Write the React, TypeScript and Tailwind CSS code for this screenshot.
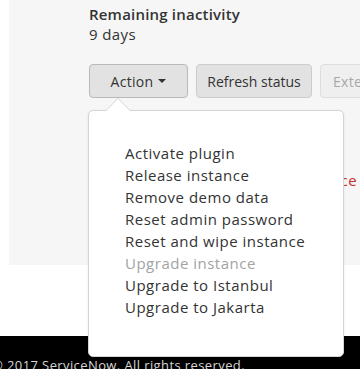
import React from "react";

const items: { label: string; disabled?: boolean }[] = [
  { label: "Activate plugin" },
  { label: "Release instance" },
  { label: "Remove demo data" },
  { label: "Reset admin password" },
  { label: "Reset and wipe instance" },
  { label: "Upgrade instance", disabled: true },
  { label: "Upgrade to Istanbul" },
  { label: "Upgrade to Jakarta" },
];

export default function App() {
  return (
    <div
      className="relative w-[360px] h-[369px] overflow-hidden bg-white text-[#333]"
      style={{ fontFamily: '"Open Sans", "Liberation Sans", sans-serif' }}
    >
      <div className="ml-[9px] h-[265px] bg-[#f6f6f6] pt-[4px] pl-[80px] overflow-hidden">
        <div className="text-[15px] font-semibold leading-[20px] tracking-[0.2px]">Remaining inactivity</div>
        <div className="text-[15px] leading-[20px] tracking-[0.4px]">9 days</div>
        <div className="mt-[20px] flex gap-[8px] whitespace-nowrap">
          <button className="h-[34px] w-[99px] shrink-0 rounded-[4px] border border-[#b9b9b9] bg-[#e2e2e2] text-[14px] text-[#333] flex items-center justify-center gap-[5px] tracking-[0.3px]">
            Action
            <span className="inline-block w-0 h-0 border-l-[4px] border-r-[4px] border-t-[4px] border-l-transparent border-r-transparent border-t-[#333]" />
          </button>
          <button className="h-[34px] w-[116px] shrink-0 rounded-[4px] border border-[#cccccc] bg-[#e2e2e2] text-[14px] text-[#333]">
            Refresh status
          </button>
          <button className="h-[34px] w-[116px] shrink-0 rounded-[4px] border border-[#dddddd] bg-[#efefef] text-[14px] text-[#a8a8a8] text-left pl-[12px] tracking-[0.3px]">
            Extend
          </button>
        </div>
        <div className="mt-[72px] text-right pr-[3px] text-[15px] leading-[20px] text-[#c9302c] whitespace-nowrap tracking-[0.4px]">
          Extend now to keep your instance
        </div>
      </div>
      <div className="h-[71px]" />
      <div className="h-[33px] bg-black text-[#d6d6d6] text-[13px] leading-[18px] pt-[20px] whitespace-nowrap tracking-[0.4px]">
        <span className="ml-[-8px]">© 2017 ServiceNow. All rights reserved.</span>
      </div>

      <div className="absolute left-[88px] top-[110px] w-[256px] h-[247px] rounded-[5px] border border-[#d4d4d4] bg-white shadow-[0_1px_3px_rgba(0,0,0,0.08)] pt-[31px] pl-[36px]">
        <div className="absolute left-[16px] top-[-13px] w-0 h-0 border-l-[13px] border-r-[13px] border-b-[13px] border-l-transparent border-r-transparent border-b-[#d4d4d4]" />
        <div className="absolute left-[17px] top-[-12px] w-0 h-0 border-l-[12px] border-r-[12px] border-b-[12px] border-l-transparent border-r-transparent border-b-white" />
        {items.map((it) => (
          <div
            key={it.label}
            className={`text-[15px] leading-[22px] whitespace-nowrap tracking-[0.5px] ${it.disabled ? "text-[#a3a3a3]" : "text-[#333]"}`}
          >
            {it.label}
          </div>
        ))}
      </div>
    </div>
  );
}
